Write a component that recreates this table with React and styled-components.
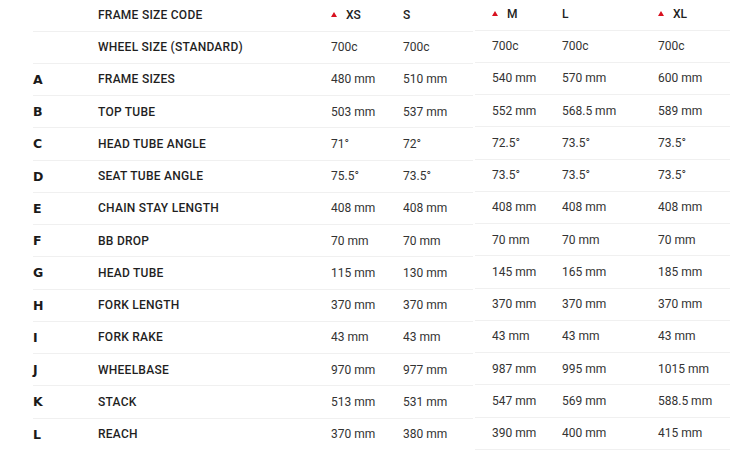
import styled, { createGlobalStyle } from "styled-components";

const GlobalStyle = createGlobalStyle`
  html, body {
    margin: 0;
    padding: 0;
    background: #fff;
  }
  body {
    font-family: Roboto, "Liberation Sans", sans-serif;
    color: #333;
  }
`;

const Page = styled.div`
  display: flex;
  align-items: flex-start;
  width: 750px;
  height: 450px;
  overflow: hidden;
`;

const Table = styled.div`
  display: flex;
  flex-direction: column;
  margin-left: ${(props) => props.offset}px;
  margin-top: ${(props) => props.lift || 0}px;
`;

const Row = styled.div`
  display: grid;
  grid-template-columns: ${(props) => props.cols};
  align-items: center;
  height: ${(props) => (props.head ? 30.5 : 31.25)}px;
  border-bottom: 1px solid #f0f0f0;
`;

const Letter = styled.span`
  font-family: "DejaVu Sans", sans-serif;
  font-weight: 700;
  font-size: 12.5px;
  color: #1a1a1a;
`;

const Label = styled.span`
  font-weight: 500;
  font-size: 12px;
  letter-spacing: 0.25px;
  color: #1f1f1f;
`;

const Value = styled.span`
  font-size: 12px;
  color: #333;
  white-space: nowrap;
`;

const SizeHead = styled.span`
  display: flex;
  align-items: center;
  font-weight: 500;
  font-size: 12px;
  color: #222;
`;

const Marker = styled.i`
  width: 0;
  height: 0;
  margin-right: 9px;
  margin-top: -2px;
  border-left: 3.5px solid transparent;
  border-right: 3.5px solid transparent;
  border-bottom: 5px solid #d8111f;
`;

const rows = [
  ["A", "FRAME SIZES", ["480 mm", "510 mm", "540 mm", "570 mm", "600 mm"]],
  ["B", "TOP TUBE", ["503 mm", "537 mm", "552 mm", "568.5 mm", "589 mm"]],
  ["C", "HEAD TUBE ANGLE", ["71°", "72°", "72.5°", "73.5°", "73.5°"]],
  ["D", "SEAT TUBE ANGLE", ["75.5°", "73.5°", "73.5°", "73.5°", "73.5°"]],
  ["E", "CHAIN STAY LENGTH", ["408 mm", "408 mm", "408 mm", "408 mm", "408 mm"]],
  ["F", "BB DROP", ["70 mm", "70 mm", "70 mm", "70 mm", "70 mm"]],
  ["G", "HEAD TUBE", ["115 mm", "130 mm", "145 mm", "165 mm", "185 mm"]],
  ["H", "FORK LENGTH", ["370 mm", "370 mm", "370 mm", "370 mm", "370 mm"]],
  ["I", "FORK RAKE", ["43 mm", "43 mm", "43 mm", "43 mm", "43 mm"]],
  ["J", "WHEELBASE", ["970 mm", "977 mm", "987 mm", "995 mm", "1015 mm"]],
  ["K", "STACK", ["513 mm", "531 mm", "547 mm", "569 mm", "588.5 mm"]],
  ["L", "REACH", ["370 mm", "380 mm", "390 mm", "400 mm", "415 mm"]],
];

const sizes = [
  { name: "XS", marked: true },
  { name: "S" },
  { name: "M", marked: true },
  { name: "L" },
  { name: "XL", marked: true },
];

const LEFT_COLS = "65px 233px 72px 70px";
const RIGHT_COLS = "17px 70px 96px 72px";

function Head({ size }) {
  return (
    <SizeHead>
      {size.marked && <Marker />}
      {size.name}
    </SizeHead>
  );
}

export default function App() {
  return (
    <>
      <GlobalStyle />
      <Page>
        <Table offset={33}>
          <Row head cols={LEFT_COLS}>
            <span />
            <Label>FRAME SIZE CODE</Label>
            <Head size={sizes[0]} />
            <Head size={sizes[1]} />
          </Row>
          <Row cols={LEFT_COLS}>
            <span />
            <Label>WHEEL SIZE (STANDARD)</Label>
            <Value>700c</Value>
            <Value>700c</Value>
          </Row>
          {rows.map(([letter, label, values]) => (
            <Row key={letter} cols={LEFT_COLS}>
              <Letter>{letter}</Letter>
              <Label>{label}</Label>
              <Value>{values[0]}</Value>
              <Value>{values[1]}</Value>
            </Row>
          ))}
        </Table>
        <Table offset={2} lift={-1}>
          <Row head cols={RIGHT_COLS}>
            <span />
            <Head size={sizes[2]} />
            <Head size={sizes[3]} />
            <Head size={sizes[4]} />
          </Row>
          <Row cols={RIGHT_COLS}>
            <span />
            <Value>700c</Value>
            <Value>700c</Value>
            <Value>700c</Value>
          </Row>
          {rows.map(([letter, , values]) => (
            <Row key={letter} cols={RIGHT_COLS}>
              <span />
              <Value>{values[2]}</Value>
              <Value>{values[3]}</Value>
              <Value>{values[4]}</Value>
            </Row>
          ))}
        </Table>
      </Page>
    </>
  );
}
